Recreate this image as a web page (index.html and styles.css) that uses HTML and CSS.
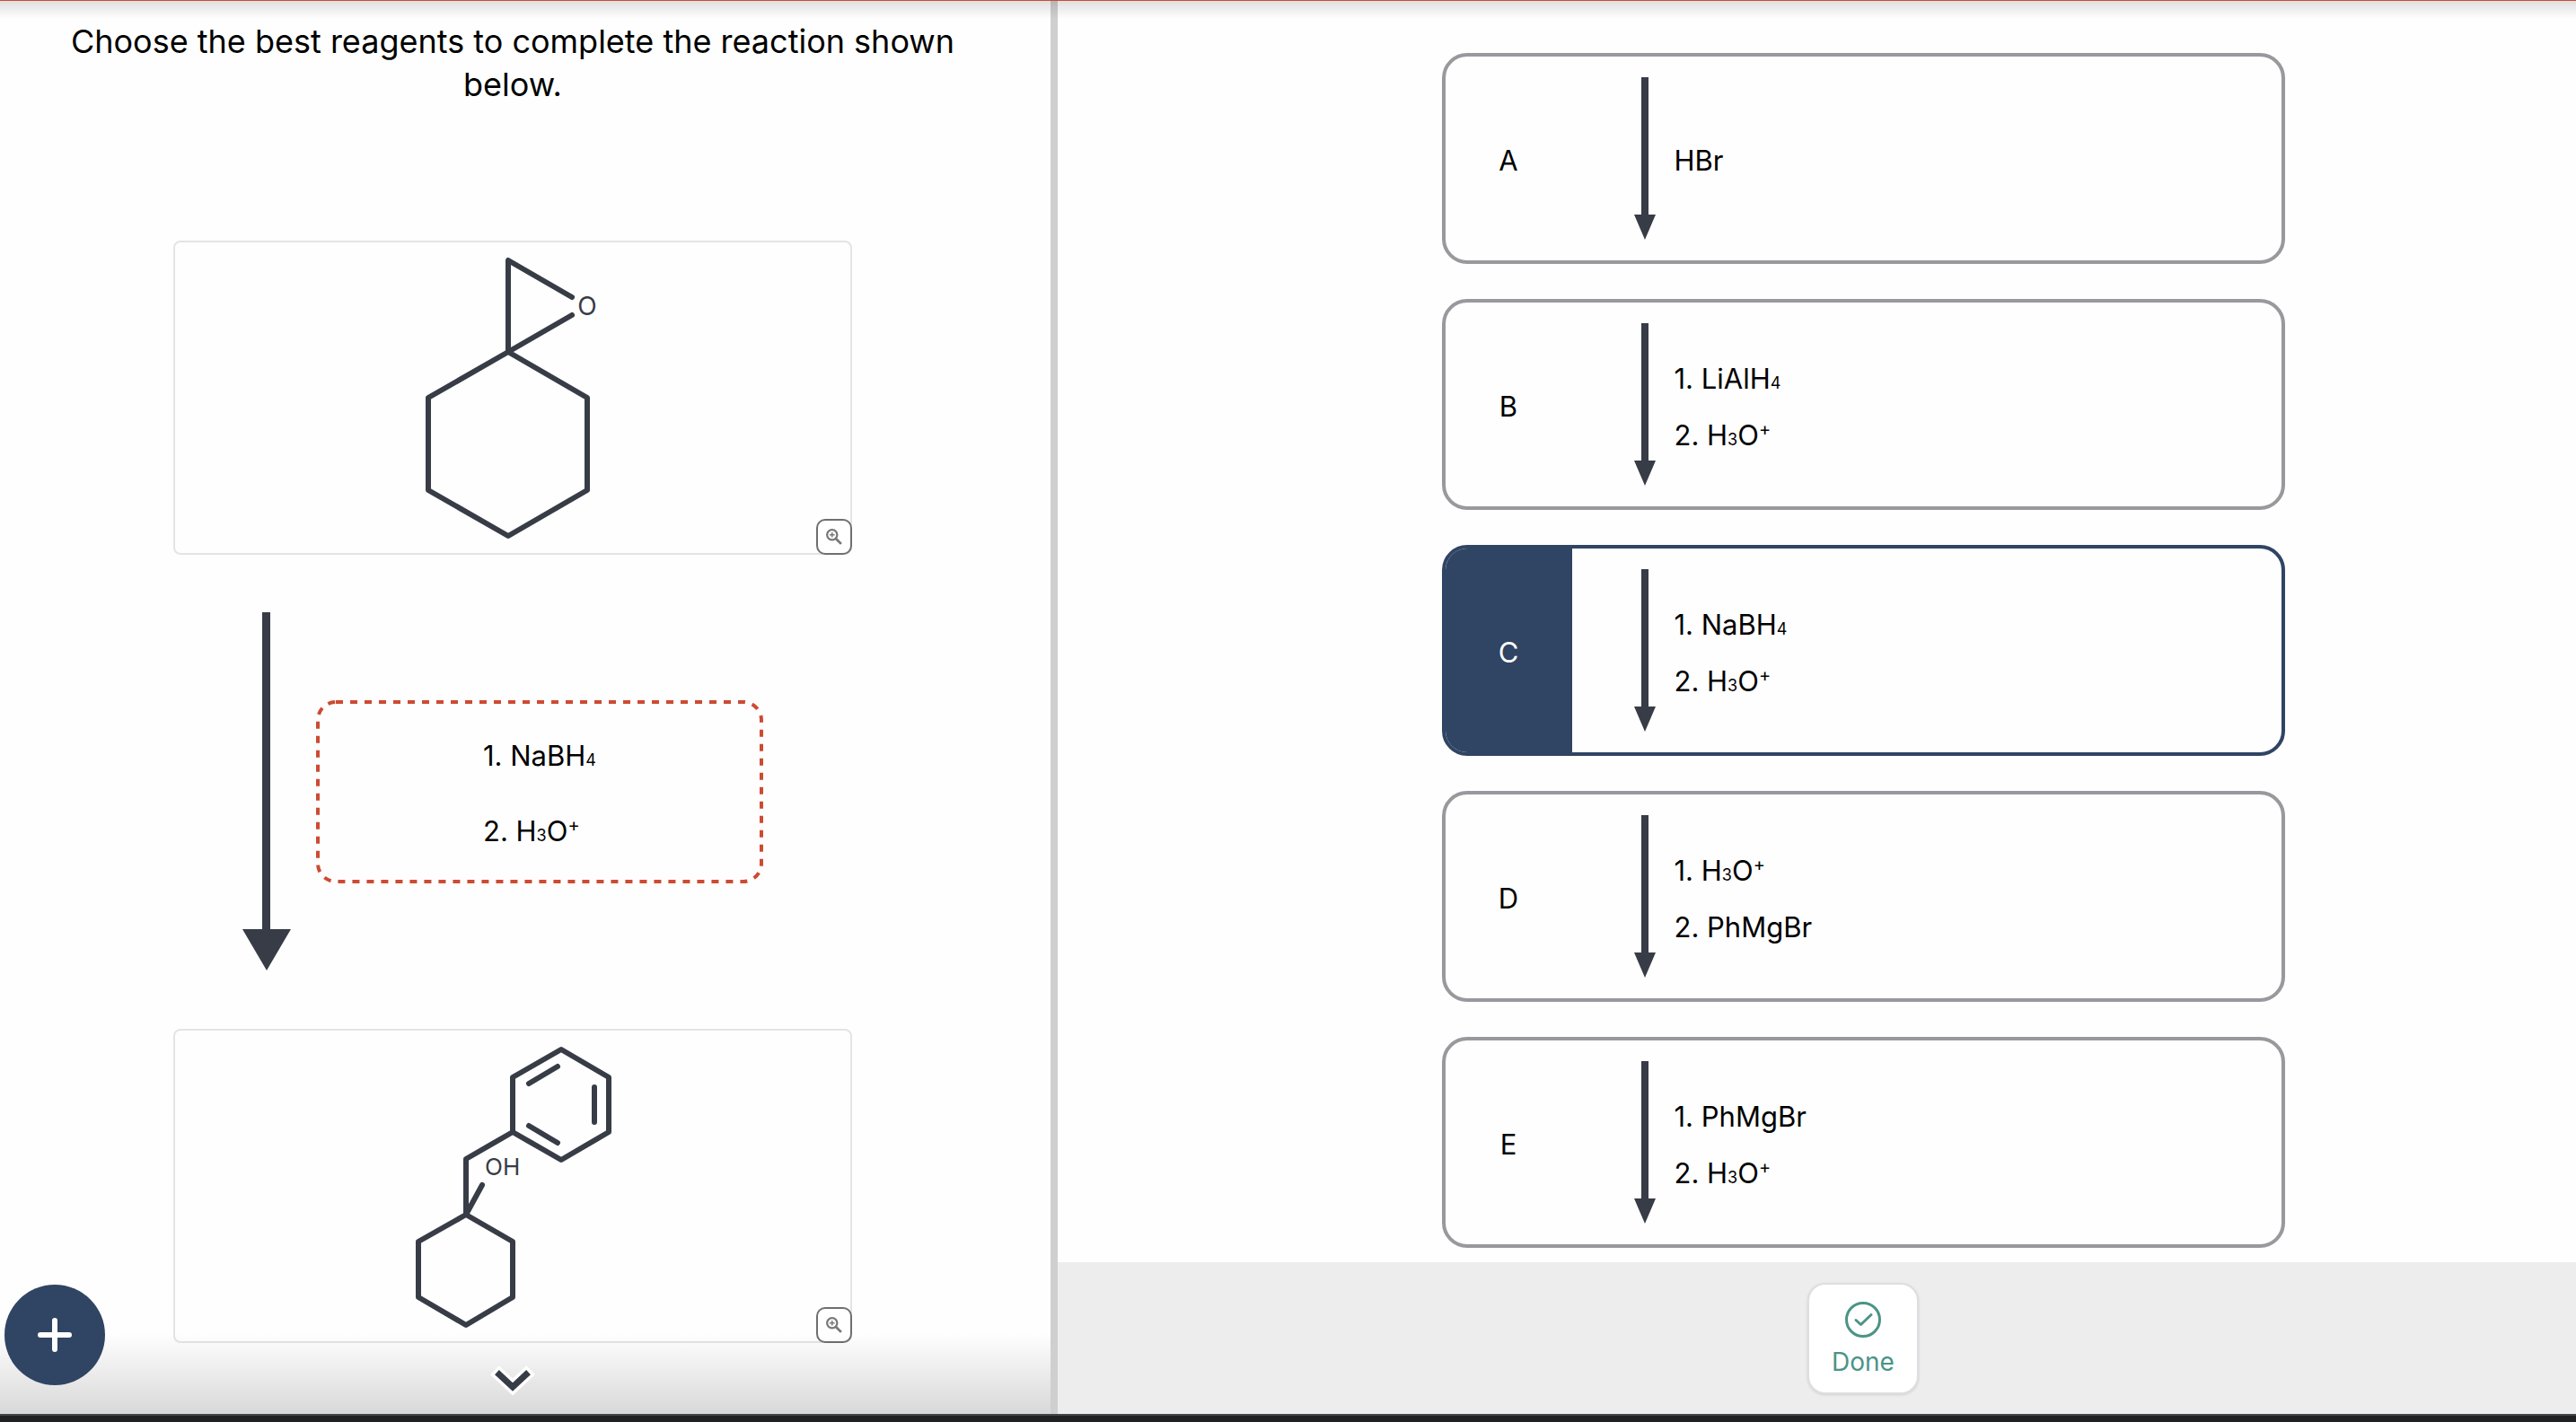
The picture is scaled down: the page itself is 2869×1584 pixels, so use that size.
FILE: index.html
```html
<!DOCTYPE html>
<html lang="en">
<head>
<meta charset="utf-8">
<title>Choose the best reagents</title>
<link rel="stylesheet" href="styles.css">
</head>
<body>
<svg class="sprite" aria-hidden="true">
  <symbol id="arrow" viewBox="0 0 24 181"><path d="M8 0h8v153h8l-12 28L0 153h8z" fill="#373c46"/></symbol>
  <symbol id="magnify" viewBox="0 0 16 16"><g fill="none" stroke="#77777a" stroke-width="2"><circle cx="6" cy="6" r="5"/><path d="M6 3.500v5M3.500 6h5" stroke-width="1.300"/><path d="M9.500 9.500l5.500 5.500" stroke-width="2.500"/></g></symbol>
</svg>
<div class="progress"></div>
<main class="layout">
  <section class="question">
    <h1 class="prompt">Choose the best reagents to complete the reaction shown below.</h1>
    <figure class="structure">
      <svg class="molecule" width="200" height="346" viewBox="0 -1 200 346" role="img" aria-label="Spiro epoxide of cyclohexane">
        <path class="bond" d="M166 60L95 19V121L166 80M95 121L6 172V275L95 326L183 275V172Z"/>
        <text class="atom" x="183" y="80" font-size="28" text-anchor="middle">O</text>
      </svg>
      <button class="zoom" type="button" aria-label="Enlarge starting material"><svg width="18" height="18"><use href="#magnify"/></svg></button>
    </figure>
    <div class="reaction">
      <svg class="reaction-arrow" width="54" height="399" viewBox="0 0 54 399" aria-hidden="true"><path d="M22 0h9v353h23l-27 46L0 353h22z" fill="#373c46"/></svg>
      <div class="answer">
        <svg class="answer-outline" aria-hidden="true"><rect x="0" y="0" width="100%" height="100%" rx="20"/></svg>
        <div class="steps steps-wide">
          <p>1. NaBH<sub>4</sub></p>
          <p>2. H<sub>3</sub>O<sup>+</sup></p>
        </div>
      </div>
    </div>
    <figure class="structure">
      <svg class="molecule" width="240" height="346" viewBox="0 -1 240 346" role="img" aria-label="1-benzylcyclohexanol">
        <path class="bond" d="M174 20L227 51V112L174 143L120 112V51ZM138 58L170 39M211 62V101M138 105L170 124M120 112L68 142V204L86 171M68 204L15 234V296L68 327L120 296V234Z"/>
        <text class="atom" x="89" y="160" font-size="26">OH</text>
      </svg>
      <button class="zoom" type="button" aria-label="Enlarge product"><svg width="18" height="18"><use href="#magnify"/></svg></button>
    </figure>
    <div class="fade">
      <svg width="50" height="40" viewBox="0 0 50 40" aria-hidden="true"><path d="M10 11l15 14 15-14" fill="none" stroke="#fff" stroke-width="14" stroke-linecap="square"/><path d="M10 11l15 14 15-14" fill="none" stroke="#373c46" stroke-width="7" stroke-linecap="square"/></svg>
    </div>
    <button class="fab" type="button" aria-label="Open tools"><svg width="40" height="40" viewBox="0 0 40 40"><path d="M20 4v32M4 20h32" stroke="#fff" stroke-width="6" stroke-linecap="round"/></svg></button>
  </section>
  <div class="divider"></div>
  <section class="answers">
    <form class="options">
      <label class="option"><input type="radio" name="reagent"><span class="letter">A</span><svg class="arrow" width="24" height="181"><use href="#arrow"/></svg><span class="steps"><span>HBr</span></span></label>
      <label class="option"><input type="radio" name="reagent"><span class="letter">B</span><svg class="arrow" width="24" height="181"><use href="#arrow"/></svg><span class="steps"><span>1. LiAlH<sub>4</sub></span><span>2. H<sub>3</sub>O<sup>+</sup></span></span></label>
      <label class="option"><input type="radio" name="reagent" checked><span class="letter">C</span><svg class="arrow" width="24" height="181"><use href="#arrow"/></svg><span class="steps"><span>1. NaBH<sub>4</sub></span><span>2. H<sub>3</sub>O<sup>+</sup></span></span></label>
      <label class="option"><input type="radio" name="reagent"><span class="letter">D</span><svg class="arrow" width="24" height="181"><use href="#arrow"/></svg><span class="steps"><span>1. H<sub>3</sub>O<sup>+</sup></span><span>2. PhMgBr</span></span></label>
      <label class="option"><input type="radio" name="reagent"><span class="letter">E</span><svg class="arrow" width="24" height="181"><use href="#arrow"/></svg><span class="steps"><span>1. PhMgBr</span><span>2. H<sub>3</sub>O<sup>+</sup></span></span></label>
    </form>
    <footer class="actions">
      <button class="done" type="button">
        <svg width="42" height="42" viewBox="0 0 42 42" fill="none" stroke="#4a9486" stroke-width="3" stroke-linecap="round" stroke-linejoin="round" aria-hidden="true"><circle cx="21" cy="21" r="18.500"/><path d="M13 21.500l5.500 5L30 15.500"/></svg>
        <span>Done</span>
      </button>
    </footer>
  </section>
</main>
<div class="base"></div>
</body>
</html>
```
FILE: styles.css
```css
* { box-sizing: border-box; }
body {
  margin: 0;
  height: 100vh;
  display: flex;
  flex-direction: column;
  overflow: hidden;
  background: #fefefe;
  color: #000;
  font-family: Inter, "Liberation Sans", sans-serif;
  font-size: 31px;
}
button { font: inherit; padding: 0; cursor: pointer; }
.sprite { position: absolute; width: 0; height: 0; }
.progress { flex: none; height: 1px; background: #cc4b37; }
.base { flex: none; height: 9px; background: #202123; border-top: 2px solid #454547; }

.layout {
  position: relative;
  flex: 1;
  min-height: 0;
  display: grid;
  grid-template-columns: minmax(0, 1170fr) 8px minmax(0, 1691fr);
}
.layout::before {
  content: "";
  position: absolute;
  inset: 0 0 auto;
  height: 20px;
  background: linear-gradient(rgba(0, 0, 0, .12), transparent);
  pointer-events: none;
}
.divider { background: #cfcfcf; }

/* Question panel */
.question {
  position: relative;
  display: flex;
  flex-direction: column;
  align-items: center;
  padding: 21px 28px 0 0;
  overflow: hidden;
}
.prompt {
  width: 90%;
  margin: 0 0 150px;
  font-size: 36px;
  font-weight: 400;
  line-height: 48px;
  text-align: center;
}
.structure {
  position: relative;
  flex: none;
  width: 66.2%;
  height: 350px;
  margin: 0;
  display: flex;
  justify-content: center;
  border: 2px solid #e4e4e4;
  border-radius: 8px;
}
.bond {
  fill: none;
  stroke: #373c46;
  stroke-width: 6;
  stroke-linecap: round;
  stroke-linejoin: round;
}
.atom { fill: #373c46; }
.zoom {
  position: absolute;
  right: -2px;
  bottom: -2px;
  width: 40px;
  height: 40px;
  display: grid;
  place-items: center;
  background: #fff;
  border: 2px solid #6f6f71;
  border-radius: 10px;
}
.reaction {
  flex: none;
  width: 66.2%;
  padding: 64px 0 65px 77px;
  display: flex;
  align-items: center;
  gap: 28px;
}
.reaction-arrow { flex: none; }
.answer {
  position: relative;
  width: 498px;
  height: 204px;
  display: grid;
  place-items: center;
}
.answer-outline {
  position: absolute;
  inset: 2px;
  width: calc(100% - 4px);
  height: calc(100% - 4px);
  overflow: visible;
}
.answer-outline rect {
  fill: none;
  stroke: #cc4b32;
  stroke-width: 4;
  stroke-dasharray: 8 8;
}
.steps { display: flex; flex-direction: column; padding-top: 4px; line-height: 63px; }
.steps-wide { line-height: 84px; }
.steps p { margin: 0; }
sub, sup { line-height: 0; }
sub { font-size: 18px; vertical-align: baseline; }
sup { font-size: 20px; vertical-align: 11px; }

.fade {
  position: absolute;
  inset: auto 0 0;
  height: 90px;
  padding: 35px 28px 0 0;
  text-align: center;
  line-height: 0;
  background: linear-gradient(transparent, rgba(0, 0, 0, .15));
  pointer-events: none;
}
.fab {
  position: absolute;
  left: 5px;
  bottom: 32px;
  width: 112px;
  height: 112px;
  display: grid;
  place-items: center;
  border: 0;
  border-radius: 50%;
  background: #304463;
}

/* Answer panel */
.answers { display: flex; flex-direction: column; min-height: 0; }
.options {
  flex: 1;
  min-height: 0;
  padding: 58px 0 0 103px;
  display: flex;
  flex-direction: column;
  align-items: center;
  gap: 39px;
}
.option {
  flex: none;
  width: 100%;
  max-width: 939px;
  height: 235px;
  display: flex;
  align-items: center;
  border: 4px solid #99999d;
  border-radius: 28px;
  overflow: hidden;
  cursor: pointer;
}
.option input { position: absolute; opacity: 0; pointer-events: none; }
.letter {
  align-self: stretch;
  width: 141px;
  padding-top: 4px;
  display: grid;
  place-items: center;
}
.option:has(:checked) { border-color: #304463; }
.option :checked + .letter { background: #304463; color: #fff; }
.arrow { flex: none; margin: 0 21px 0 69px; }
.actions {
  flex: none;
  height: 169px;
  padding: 23px 0 0 103px;
  display: flex;
  justify-content: center;
  align-items: flex-start;
  background: #ededed;
}
.done {
  width: 124px;
  height: 124px;
  padding-top: 1px;
  display: flex;
  flex-direction: column;
  align-items: center;
  justify-content: center;
  gap: 9px;
  border: 2px solid #dedee2;
  border-radius: 20px;
  background: #fff;
  box-shadow: 0 1px 3px rgba(0, 0, 0, .12);
  color: #4a9486;
  font-size: 28px;
}
```
